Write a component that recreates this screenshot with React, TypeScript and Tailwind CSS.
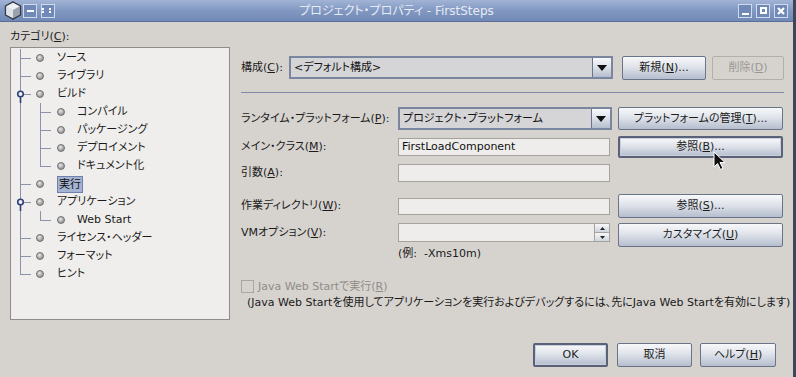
import type { ReactNode } from "react";

// 툴킷 스타일 다이얼로그: 프로젝트 속성 창
const FONT = "font-['DejaVu_Sans','Noto_Sans_CJK_JP',sans-serif] [font-feature-settings:'palt']";

const TREE = [
  { label: "ソース", depth: 0 },
  { label: "ライブラリ", depth: 0 },
  { label: "ビルド", depth: 0, open: true },
  { label: "コンパイル", depth: 1 },
  { label: "パッケージング", depth: 1 },
  { label: "デプロイメント", depth: 1 },
  { label: "ドキュメント化", depth: 1, lastChild: true },
  { label: "実行", depth: 0, selected: true },
  { label: "アプリケーション", depth: 0, open: true },
  { label: "Web Start", depth: 1, lastChild: true },
  { label: "ライセンス・ヘッダー", depth: 0 },
  { label: "フォーマット", depth: 0 },
  { label: "ヒント", depth: 0, last: true },
];

const BTN =
  "flex shrink-0 items-center justify-center rounded-[2px] bg-[linear-gradient(to_bottom,#f7f8fa_0%,#dfe3ea_45%,#b5bece_100%)] text-[#1c1c1c]";

// 니모닉: 괄호 안 글자에 밑줄
function Mn({ pre, k, post = "" }: { pre: string; k: string; post?: string }) {
  return (
    <>
      {pre}(<span className="underline underline-offset-[1px]">{k}</span>){post}
    </>
  );
}

function Button({
  children,
  className,
  variant = "normal",
}: {
  children: ReactNode;
  className: string;
  variant?: "normal" | "focus" | "disabled";
}) {
  if (variant === "disabled") {
    return (
      <div
        className={`flex shrink-0 items-center justify-center rounded-[2px] border border-[#b3b0ac] text-[#9a9793] ${className}`}
      >
        {children}
      </div>
    );
  }
  const border =
    variant === "focus"
      ? "border-2 border-[#596279] shadow-[inset_0_0_0_1px_#c9cfda]"
      : "border border-[#6a7489]";
  return <div className={`${BTN} ${border} ${className}`}>{children}</div>;
}

function ArrowButton() {
  return (
    <div className="flex h-full w-[19px] items-center justify-center border-l border-[#6a7489] bg-[linear-gradient(to_bottom,#f7f8fa_0%,#dfe3ea_45%,#b5bece_100%)]">
      <svg width="10" height="6" viewBox="0 0 10 6">
        <path d="M0 0h10L5 6z" fill="#111" />
      </svg>
    </div>
  );
}

function Combo({ text, className }: { text: string; className: string }) {
  return (
    <div
      className={`flex shrink-0 items-center border-2 border-[#7a85a0] bg-[#d5d4d6] ${className}`}
    >
      <span className="flex-1 pl-[3px] text-[#111]">{text}</span>
      <ArrowButton />
    </div>
  );
}

function Field({ text = "", className }: { text?: string; className: string }) {
  return (
    <div
      className={`flex shrink-0 items-center border border-[#a6a29e] bg-[#eeedeb] pl-[3px] text-[#111] ${className}`}
    >
      {text}
    </div>
  );
}

function Bullet({ left }: { left: string }) {
  return (
    <span
      className={`absolute top-[5px] h-[8px] w-[8px] rounded-full border border-[#6e6e6e] bg-[radial-gradient(circle_at_40%_35%,#e8e8e8_0%,#a9a9a9_55%,#7e7e7e_100%)] ${left}`}
    />
  );
}

function TreeRow({
  label,
  depth,
  open,
  last,
  lastChild,
  selected,
}: {
  label: string;
  depth: number;
  open?: boolean;
  last?: boolean;
  lastChild?: boolean;
  selected?: boolean;
}) {
  return (
    <div className={`relative flex h-[18px] items-center ${depth === 0 ? "pl-[46px]" : "pl-[66px]"}`}>
      <span className={`absolute left-[9px] top-0 w-px bg-[#8a93ab] ${last ? "h-[9px]" : "h-full"}`} />
      {depth === 0 ? (
        <>
          <span className="absolute left-[9px] top-[9px] h-px w-[11px] bg-[#8a93ab]" />
          {open && (
            <svg className="absolute left-[5px] top-[4px]" width="9" height="14" viewBox="0 0 9 14">
              <circle cx="4.5" cy="5" r="2.8" fill="#eef0f6" stroke="#2f3f78" strokeWidth="1.6" />
              <path d="M4.5 7.8V14" stroke="#2f3f78" strokeWidth="1.6" />
            </svg>
          )}
          <Bullet left="left-[25px]" />
        </>
      ) : (
        <>
          <span className={`absolute left-[29px] top-0 w-px bg-[#8a93ab] ${lastChild ? "h-[9px]" : "h-full"}`} />
          <span className="absolute left-[29px] top-[9px] h-px w-[11px] bg-[#8a93ab]" />
          <Bullet left="left-[46px]" />
        </>
      )}
      {selected ? (
        <span className="border border-[#6f81ab] bg-[#a5b3d2] px-[1px] leading-[15px] text-[#111]">{label}</span>
      ) : (
        <span className="text-[#1a1a1a]">{label}</span>
      )}
    </div>
  );
}

function TitleBar() {
  return (
    <div className="relative flex h-[22px] shrink-0 items-center border-b border-[#5b6d98] bg-[linear-gradient(to_bottom,#a1b4d6_0%,#8298c2_50%,#7189b6_100%)] px-[4px]">
      {/* 앱 아이콘 */}
      <svg width="18" height="19" viewBox="0 0 18 19">
        <path d="M9 1 16.5 5v9L9 18 1.5 14V5z" fill="#c9ced6" stroke="#3c4250" strokeWidth="1.2" />
        <path d="M9 1 16.5 5 9 9 1.5 5z" fill="#eef0f3" />
        <path d="M1.5 5 9 9v9L1.5 14z" fill="#dfe3e8" />
        <path d="M9 9 16.5 5v9L9 18z" fill="#9aa2ae" />
        <path d="M9 1 16.5 5v9L9 18 1.5 14V5z" fill="none" stroke="#333a48" strokeWidth="1.2" />
      </svg>
      <div className="ml-[1px] flex h-[14px] w-[14px] items-center justify-center border border-[#d2dbec] bg-[#7089b7]">
        <span className="h-[2px] w-[7px] bg-white" />
      </div>
      <div className="ml-[4px] grid h-[14px] w-[14px] grid-cols-2 place-content-center gap-[1px] border border-[#d2dbec] bg-[#7089b7]">
        <span className="h-[2px] w-[2px] bg-white" />
        <span className="h-[2px] w-[2px] bg-white" />
        <span className="h-[2px] w-[2px] bg-white" />
        <span className="h-[2px] w-[2px] bg-white" />
      </div>
      <div className="flex-1 text-center text-[12px] text-[#e6ebf4]">プロジェクト・プロパティ - FirstSteps</div>
      <div className="flex gap-[4px] pr-[1px]">
        <div className="flex h-[14px] w-[14px] items-end justify-center border border-[#d2dbec] bg-[#7089b7] pb-[2px]">
          <span className="h-[2px] w-[7px] bg-white" />
        </div>
        <div className="flex h-[14px] w-[14px] items-center justify-center border border-[#d2dbec] bg-[#7089b7]">
          <span className="h-[7px] w-[7px] border-2 border-white" />
        </div>
        <div className="flex h-[14px] w-[14px] items-center justify-center border border-[#d2dbec] bg-[#7089b7]">
          <svg width="8" height="8" viewBox="0 0 8 8">
            <path d="M1 1l6 6M7 1 1 7" stroke="#fff" strokeWidth="2.2" />
          </svg>
        </div>
      </div>
    </div>
  );
}

export default function App() {
  return (
    <div
      className={`relative flex h-[377px] w-[796px] flex-col overflow-hidden border-r-[3px] border-[#40465a] bg-[#d6d3cf] text-[11px] leading-[14px] ${FONT}`}
    >
      <TitleBar />

      <div className="flex h-[298px] shrink-0">
        {/* 카테고리 트리 */}
        <div className="flex w-[230px] shrink-0 flex-col pl-[10px] pt-[8px]">
          <div className="h-[14px] text-[#1a1a1a]">
            <Mn pre="カテゴリ" k="C" post=":" />
          </div>
          <div className="mt-[3px] h-[273px] w-[220px] border border-[#8f8b86] bg-[#efeeec] pt-[1px]">
            {TREE.map((item) => (
              <TreeRow key={item.label} {...item} />
            ))}
          </div>
        </div>

        {/* 설정 폼 */}
        <div className="flex flex-1 flex-col pl-[11px] pt-[34px] text-[#1a1a1a]">
          <div className="flex h-[23px] items-center">
            <div className="w-[48px] shrink-0">
              <Mn pre="構成" k="C" post=":" />
            </div>
            <Combo text="<デフォルト構成>" className="h-[23px] w-[324px]" />
            <Button className="ml-[9px] h-[24px] w-[84px]">
              新規(<span className="underline underline-offset-[1px]">N</span>)...
            </Button>
            <Button variant="disabled" className="ml-[6px] h-[24px] w-[72px]">
              <Mn pre="削除" k="D" />
            </Button>
          </div>

          <div className="mt-[13px] h-px w-[543px] bg-[#7d88a6]" />

          <div className="mt-[14px] flex h-[23px] items-center">
            <div className="w-[157px] shrink-0">
              <Mn pre="ランタイム・プラットフォーム" k="P" post=":" />
            </div>
            <Combo text="プロジェクト・プラットフォーム" className="h-[23px] w-[214px]" />
            <Button className="ml-[6px] h-[23px] w-[165px]">
              <Mn pre="プラットフォームの管理" k="T" post="..." />
            </Button>
          </div>

          <div className="mt-[6px] flex h-[22px] items-center">
            <div className="w-[157px] shrink-0">
              <Mn pre="メイン・クラス" k="M" post=":" />
            </div>
            <Field text="FirstLoadComponent" className="h-[18px] w-[212px]" />
            <Button variant="focus" className="ml-[8px] h-[22px] w-[165px]">
              <Mn pre="参照" k="B" post="..." />
            </Button>
          </div>

          <div className="mt-[5px] flex h-[19px] items-center">
            <div className="w-[157px] shrink-0">
              <Mn pre="引数" k="A" post=":" />
            </div>
            <Field className="h-[18px] w-[212px]" />
          </div>

          <div className="mt-[12px] flex h-[24px] items-center">
            <div className="w-[157px] shrink-0">
              <Mn pre="作業ディレクトリ" k="W" post=":" />
            </div>
            <Field className="h-[17px] w-[212px]" />
            <Button className="ml-[8px] h-[24px] w-[165px]">
              <Mn pre="参照" k="S" post="..." />
            </Button>
          </div>

          <div className="mt-[5px] flex h-[24px] items-start">
            <div className="flex h-[19px] w-[157px] shrink-0 items-center">
              <Mn pre="VMオプション" k="V" post=":" />
            </div>
            <div className="flex h-[19px] w-[212px] shrink-0 border border-[#a6a29e] bg-[#eeedeb]">
              <div className="flex-1" />
              <div className="flex w-[15px] flex-col border-l border-[#a6a29e]">
                <div className="flex flex-1 items-center justify-center border-b border-[#a6a29e] bg-[linear-gradient(to_bottom,#f7f8fa,#cfd5de)]">
                  <svg width="5" height="3" viewBox="0 0 5 3">
                    <path d="M0 3h5L2.5 0z" fill="#222" />
                  </svg>
                </div>
                <div className="flex flex-1 items-center justify-center bg-[linear-gradient(to_bottom,#f7f8fa,#cfd5de)]">
                  <svg width="5" height="3" viewBox="0 0 5 3">
                    <path d="M0 0h5L2.5 3z" fill="#222" />
                  </svg>
                </div>
              </div>
            </div>
            <Button className="ml-[8px] h-[24px] w-[165px]">
              <Mn pre="カスタマイズ" k="U" />
            </Button>
          </div>

          <div className="h-[14px] pl-[157px]">(例:&nbsp;&nbsp;-Xms10m)</div>

          <div className="mt-[19px] flex h-[13px] items-center">
            <span className="h-[13px] w-[13px] shrink-0 border border-[#a9a6a2]" />
            <span className="ml-[4px] text-[#8f8c88]">
              <Mn pre="Java Web Startで実行" k="R" />
            </span>
          </div>

          <div className="ml-[6px] mt-[3px] whitespace-nowrap">
            (Java Web Startを使用してアプリケーションを実行およびデバッグするには、先にJava Web Startを有効にします)
          </div>
        </div>
      </div>

      {/* 하단 버튼 */}
      <div className="flex justify-end pr-[17px] pt-[23px]">
        <Button variant="focus" className="h-[24px] w-[75px]">
          OK
        </Button>
        <Button className="ml-[9px] h-[24px] w-[75px]">取消</Button>
        <Button className="ml-[8px] h-[24px] w-[76px]">
          <Mn pre="ヘルプ" k="H" />
        </Button>
      </div>

      {/* 마우스 커서 */}
      <svg className="absolute left-[713px] top-[151px]" width="13" height="20" viewBox="0 0 13 20">
        <path d="M1 1v15l3.5-3.5 3 6 2.5-1.2-3-5.8H12z" fill="#111" stroke="#fff" strokeWidth="1" />
      </svg>
    </div>
  );
}
